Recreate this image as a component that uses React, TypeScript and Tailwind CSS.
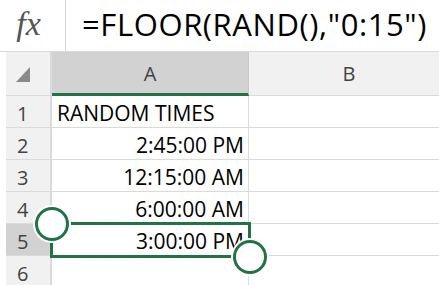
import React from "react";

const rows = [
  { n: "1", text: "RANDOM TIMES", align: "left" },
  { n: "2", text: "2:45:00 PM", align: "right" },
  { n: "3", text: "12:15:00 AM", align: "right" },
  { n: "4", text: "6:00:00 AM", align: "right" },
  { n: "5", text: "3:00:00 PM", align: "right" },
  { n: "6", text: "", align: "right" },
];

export default function App() {
  return (
    <div className="relative w-[439px] h-[285px] overflow-hidden bg-white font-['Open_Sans',sans-serif]">
      {/* formula bar */}
      <div className="flex h-[52px] border-b border-[#dadada]">
        <div className="w-[66px] shrink-0 border-r border-[#d4d4d4] flex items-center justify-center pb-[4px] pr-[8px]">
          <span className="font-['Liberation_Serif',serif] italic text-[34px] leading-none text-[#555555]">fx</span>
        </div>
        <div className="flex items-center pl-[16px] pb-[2px] text-[31px] leading-none text-black whitespace-nowrap tracking-[0.6px]">
          =FLOOR(RAND(),"0:15")
        </div>
      </div>

      {/* grid */}
      <div className="flex">
        <div className="w-[6px] shrink-0 bg-white" />
        <div className="flex-1 flex flex-col">
          {/* header row */}
          <div className="flex h-[44px]">
            <div className="relative w-[46px] shrink-0 bg-[#f1f1f1] border-r-2 border-b border-[#dadada]">
              <svg className="absolute left-[9px] top-[14px]" width="16" height="17" viewBox="0 0 16 17">
                <polygon points="15,1 15,16 1,16" fill="#8a8a8a" />
              </svg>
            </div>
            <div className="w-[197px] shrink-0 bg-[#d2d2d2] border-r border-[#c8c8c8] border-b-[3px] border-b-[#217346] flex items-center justify-center text-[20px] text-[#444444] pt-[2px]">
              A
            </div>
            <div className="w-[200px] shrink-0 bg-[#f1f1f1] border-b border-[#dadada] flex items-center justify-center text-[20px] text-[#444444] pt-[1px]">
              B
            </div>
          </div>
          {rows.map((r) => (
            <div key={r.n} className="flex h-[32px]">
              <div
                className={`w-[46px] shrink-0 border-r-2 border-b border-[#dadada] flex items-center pl-[11px] pt-[4px] text-[20px] text-[#444444] ${
                  r.n === "5" ? "bg-[#d2d2d2]" : "bg-[#f1f1f1]"
                }`}
              >
                {r.n}
              </div>
              <div
                className={`w-[197px] shrink-0 border-r border-b border-[#dadada] flex items-center pt-[4px] text-[21px] text-black whitespace-nowrap ${
                  r.align === "left" ? "justify-start pl-[5px]" : "justify-end pr-[4px]"
                }`}
              >
                {r.text}
              </div>
              <div className="w-[200px] shrink-0 border-b border-[#dadada]" />
            </div>
          ))}
        </div>
      </div>

      {/* selection overlay */}
      <div className="absolute left-[50px] top-[222px] w-[201px] h-[36px] border-[3px] border-[#217346]" />
      <div className="absolute left-[35px] top-[207px] w-[34px] h-[34px] rounded-full border-[3px] border-[#217346] bg-white ring-2 ring-white" />
      <div className="absolute left-[233px] top-[240px] w-[34px] h-[34px] rounded-full border-[3px] border-[#217346] bg-white ring-2 ring-white" />
    </div>
  );
}
